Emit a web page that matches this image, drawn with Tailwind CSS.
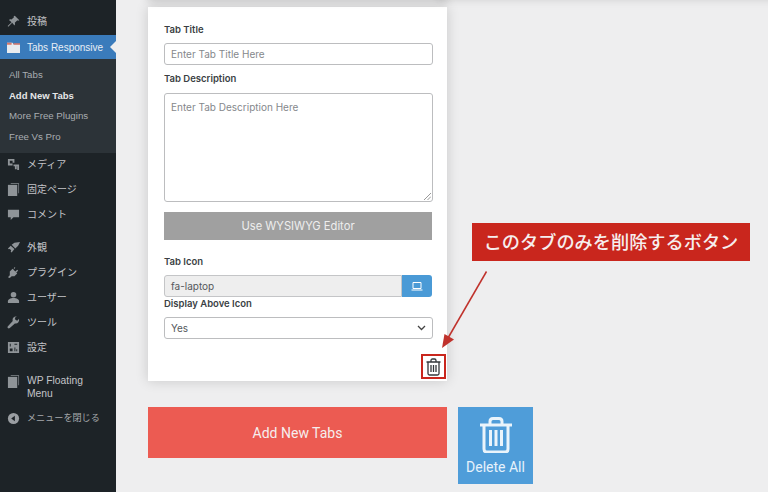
<!DOCTYPE html>
<html lang="ja"><head><meta charset="utf-8">
<script src="https://cdn.jsdelivr.net/npm/@tailwindcss/browser@4"></script>
</head>
<body class="m-0 overflow-hidden">
<div class="relative flex w-[768px] h-[492px] overflow-hidden bg-[#eeeeef] font-['Liberation_Sans','Noto_Sans_CJK_JP',sans-serif]">
  <aside class="w-[116px] h-full shrink-0 bg-[#1d2327] text-[#c3c4c7] text-[10px] pt-[9px] flex flex-col">
    <div class="h-[25px] flex items-center gap-[7px] pl-[7px]"><svg class="w-[13px] h-[13px] shrink-0" viewBox="0 0 20 20" fill="#8f9498"><path d="M12 1l7 7-2 1-1-1-4 4c.6 1.600.4 3-.5 4L8 12l-6 6-1-1 6-6-4-3.500c1-.9 2.400-1.100 4-.5l4-4-1-1z"/></svg><span>投稿</span></div>
    <div class="relative h-[24px] mt-[1px] flex items-center gap-[7px] pl-[7px] bg-[#3a7bbb] text-[#e8eef5]">
      <svg class="w-[13px] h-[13px] shrink-0" viewBox="0 0 14 14"><path d="M0 2h6l1 1.500h7V13H0z" fill="#e9ecef"/><path d="M0 2h5v2H0zM7 2.500h7v1.500H7z" fill="#d9786a"/></svg><span class="whitespace-nowrap">Tabs Responsive</span>
      <div class="absolute right-0 top-[6px] w-0 h-0 border-y-[6px] border-y-transparent border-r-[6px] border-r-[#eeeeef]"></div>
    </div>
    <div class="bg-[#2c3338] h-[94px] pt-[6px] pl-[9px] text-[9.700px] leading-[20.500px] text-[#a9adb1]">
      <div>All Tabs</div><div class="font-bold text-[9.500px] text-[#e6e7e8]">Add New Tabs</div><div>More Free Plugins</div><div>Free Vs Pro</div>
    </div>
    <div class="h-[25px] -mt-px flex items-center gap-[7px] pl-[7px]"><svg class="w-[13px] h-[13px] shrink-0" viewBox="0 0 14 14" fill="none" stroke="#8f9498" stroke-width="2"><path d="M7 5V2H2v5h4M7 8h5v5M9.500 8v4"/></svg><span>メディア</span></div>
    <div class="h-[25px] flex items-center gap-[7px] pl-[7px]"><svg class="w-[13px] h-[13px] shrink-0" viewBox="0 0 14 14" fill="#8f9498"><path d="M4 0h9v11h-1V1H4z" opacity=".7"/><path d="M1 2h10v12H1z"/></svg><span>固定ページ</span></div>
    <div class="h-[25px] flex items-center gap-[7px] pl-[7px]"><svg class="w-[13px] h-[13px] shrink-0" viewBox="0 0 14 14" fill="#8f9498"><path d="M1 2h12v8H7l-3 3v-3H1z"/></svg><span>コメント</span></div>
    <div class="h-[25px] flex items-center gap-[7px] pl-[7px] mt-[8px]"><svg class="w-[13px] h-[13px] shrink-0" viewBox="0 0 14 14" fill="#8f9498"><path d="M14 1L8 2 5 4l4 4 3-3zM4 5L1 8l1 1 1-.500L4.500 10 4 11.500l1 1 3-4z"/></svg><span>外観</span></div>
    <div class="h-[25px] flex items-center gap-[7px] pl-[7px]"><svg class="w-[13px] h-[13px] shrink-0" viewBox="0 0 14 14" fill="#8f9498"><path d="M8 1l1 1-2 2 2 2 2-2 1 1-2 2 1 1-3 3H5l-2 2-2-1 2-2V6l3-3 1 1z"/></svg><span>プラグイン</span></div>
    <div class="h-[25px] flex items-center gap-[7px] pl-[7px]"><svg class="w-[13px] h-[13px] shrink-0" viewBox="0 0 14 14" fill="#8f9498"><circle cx="7" cy="4" r="3"/><path d="M1 13v-2c0-2 2.500-3.500 6-3.500s6 1.500 6 3.500v2z"/></svg><span>ユーザー</span></div>
    <div class="h-[25px] flex items-center gap-[7px] pl-[7px]"><svg class="w-[13px] h-[13px] shrink-0" viewBox="0 0 14 14" fill="#8f9498"><path d="M13 3l-2 2-2-1-.500-2L10.500.500C8 0 6 1.500 6 4c0 .6.100 1 .2 1.400L1 11c-.7.800-.5 1.500 0 2s1.300.6 2-.1L8.500 8c2.700.7 5-1.500 4.500-5z"/></svg><span>ツール</span></div>
    <div class="h-[25px] flex items-center gap-[7px] pl-[7px]"><svg class="w-[13px] h-[13px] shrink-0" viewBox="0 0 14 14" fill="#8f9498"><path fill-rule="evenodd" d="M1 1h12v12H1zm2 2v3h1V3zm5 0v1h3V3zM3 8v3h3V8zm5-1v4h1V7zm2 2v2h1V9z"/></svg><span>設定</span></div>
    <div class="flex gap-[7px] pl-[7px] mt-[14px] leading-[13px] text-[10.300px]"><svg class="w-[13px] h-[13px] shrink-0 mt-[1px]" viewBox="0 0 14 14" fill="#8f9498"><path d="M4 0h9v11h-1V1H4z" opacity=".7"/><path d="M1 2h10v12H1z"/></svg><span class="w-[70px]">WP Floating Menu</span></div>
    <div class="h-[25px] flex items-center gap-[7px] pl-[7px] mt-[6px] text-[9.100px] text-[#a7aaad]"><svg class="w-[13px] h-[13px] shrink-0" viewBox="0 0 14 14"><circle cx="7" cy="7" r="6" fill="#9a9ea2"/><path d="M8.500 4v6L4.500 7z" fill="#1d2327"/></svg><span class="whitespace-nowrap">メニューを閉じる</span></div>
  </aside>

  <main class="relative flex-1 pl-[32px]">
    <div class="absolute left-[322px] top-[-10px] w-[420px] h-[10px] bg-[#eeeeef] shadow-[0_0_9px_rgba(0,0,0,0.12)]"></div>
    <div class="absolute left-[32px] top-[-14px] w-[299px] h-[14px] shadow-[0_0_10px_rgba(0,0,0,0.2)]"></div>
    <section class="mt-[7px] w-[299px] h-[374px] bg-white shadow-[0_0_12px_rgba(0,0,0,0.16)] pt-[17px] px-[16px] flex flex-col text-[#3b3f44] font-['Inter',sans-serif]">
      <label class="text-[9.500px] leading-[12px] font-semibold">Tab Title</label>
      <div class="mt-[7px] h-[22px] w-[269px] border border-[#bcbdbf] rounded-[3px] pl-[6px] flex items-center text-[10px] text-[#85888c]">Enter Tab Title Here</div>
      <label class="mt-[8px] text-[9.500px] leading-[12px] font-semibold">Tab Description</label>
      <div class="relative mt-[8px] h-[109px] w-[269px] border border-[#bcbdbf] rounded-[3px] pl-[6px] pt-[7px] text-[10px] leading-[13px] text-[#85888c]">Enter Tab Description Here
        <svg class="absolute right-[1px] bottom-[1px] w-[7px] h-[7px]" viewBox="0 0 7 7" stroke="#999" fill="none"><path d="M0 7L7 0M3.500 7L7 3.500"/></svg>
      </div>
      <div class="mt-[10px] h-[28px] w-[268px] bg-[#a0a0a0] text-[#eeeeee] text-[11.200px] flex items-center justify-center">Use WYSIWYG Editor</div>
      <label class="mt-[16px] text-[9.500px] leading-[12px] font-semibold">Tab Icon</label>
      <div class="mt-[7px] flex w-[268px] h-[22px]">
        <div class="flex-1 border border-[#c4c5c7] bg-[#eeeeee] rounded-l-[3px] pl-[6px] flex items-center text-[10px] text-[#55585c]">fa-laptop</div>
        <div class="w-[30px] bg-[#4a9ad6] rounded-r-[3px] flex items-center justify-center"><svg class="w-[12px] h-[9px]" viewBox="0 0 12 9" fill="none" stroke="#fff"><path d="M2 .5h8v6H2zM.5 8h11"/></svg></div>
      </div>
      <label class="mt-[1px] text-[9.500px] leading-[12px] font-semibold">Display Above Icon</label>
      <div class="mt-[7px] h-[22px] w-[269px] border border-[#bcbdbf] rounded-[3px] pl-[6px] pr-[6px] flex items-center justify-between text-[10px] text-[#55585c]">Yes<svg class="w-[9px] h-[6px]" viewBox="0 0 9 6" fill="none" stroke="#444" stroke-width="1.300"><path d="M1 1l3.500 3.500L8 1"/></svg></div>
    </section>
    <div class="mt-[26px] flex items-start gap-[11px]">
      <button class="w-[299px] h-[51px] pt-[2px] bg-[#ec5b52] text-[#f5eeee] text-[14px] font-['Roboto',sans-serif]">Add New Tabs</button>
      <button class="w-[75px] h-[77px] bg-[#4f9dd9] text-[#e6f2fb] text-[14px] leading-[16px] flex flex-col items-center pt-[10px] font-['Roboto',sans-serif]">
        <svg class="w-[34px] h-[36px]" viewBox="0 0 34 36" fill="none" stroke="#eaf4fb" stroke-width="3"><path d="M1 8h32M11 8V4.500q0-3 3-3h6q3 0 3 3V8M5 8v24q0 3 3 3h18q3 0 3-3V8"/><path d="M11.500 13v16M17 13v16M22.500 13v16"/></svg>
        <span class="mt-[6px]">Delete All</span>
      </button>
    </div>
  </main>

  <!-- annotation overlay -->
  <div class="absolute left-[472px] top-[223px] w-[278px] h-[38px] bg-[#c9261d] text-[#f6eeee] text-[18.200px] font-medium flex items-center justify-center whitespace-nowrap font-['Noto_Sans_CJK_JP',sans-serif]">このタブのみを削除するボタン</div>
  <svg class="absolute left-[440px] top-[270px] w-[50px] h-[80px]" viewBox="0 0 50 80" fill="none"><path d="M46.500 1.500L8 68" stroke="#c0322c" stroke-width="1.500"/><path d="M2 78l2.500-14 9.500 5.500z" fill="#c0322c"/></svg>
  <div class="absolute left-[421px] top-[354px] w-[25px] h-[25px] border-2 border-[#c9261d] flex items-center justify-center">
    <svg class="w-[15px] h-[18px]" viewBox="0 0 15 18" fill="none" stroke="#33373b" stroke-width="1.300"><path d="M.5 4h14M5 4V2.500q0-1.500 1.500-1.500h2q1.500 0 1.500 1.500V4M2 4v11.500q0 1.500 1.500 1.500h8q1.500 0 1.500-1.500V4"/><path d="M5 7v7M7.500 7v7M10 7v7"/></svg>
  </div>
</div>
</body></html>
